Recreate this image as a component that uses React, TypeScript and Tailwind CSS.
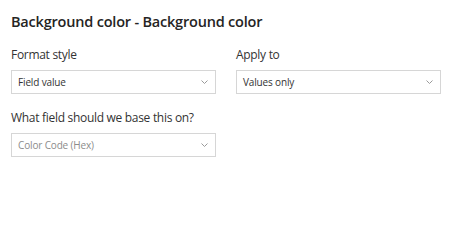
import React from "react";

const Chevron = () => (
  <svg width="7" height="4" viewBox="0 0 7 4" fill="none" className="shrink-0">
    <path d="M0.5 0.5 L3.5 3.5 L6.5 0.5" stroke="#9a9a9a" strokeWidth="1" />
  </svg>
);

const Select = ({ value, placeholder }: { value: string; placeholder?: boolean }) => (
  <div className="flex h-[24px] w-[205px] items-center justify-between border border-[#d6d6d6] bg-white pl-[6px] pr-[7px]">
    <span className={`text-[10px] leading-none tracking-[-0.15px] ${placeholder ? "text-[#8c8c8c]" : "text-[#333333]"}`}>{value}</span>
    <Chevron />
  </div>
);

export default function App() {
  return (
    <div className="h-[248px] w-[474px] bg-white pl-[11px] pt-[12px] text-[#252423]" style={{ fontFamily: '"Open Sans", "Noto Sans", sans-serif' }}>
      <div className="text-[14.5px] font-semibold leading-[20px] tracking-[-0.2px]">Background color - Background color</div>
      <div className="mt-[14px] flex gap-[20px]">
        <div className="flex flex-col">
          <div className="text-[12px] leading-[17px] tracking-[-0.3px] text-[#333]">Format style</div>
          <div className="mt-[7px]"><Select value="Field value" /></div>
        </div>
        <div className="flex flex-col">
          <div className="text-[12px] leading-[17px] tracking-[-0.3px] text-[#333]">Apply to</div>
          <div className="mt-[7px]"><Select value="Values only" /></div>
        </div>
      </div>
      <div className="mt-[15px] text-[12px] leading-[17px] tracking-[-0.3px] text-[#333]">What field should we base this on?</div>
      <div className="mt-[7px]"><Select value="Color Code (Hex)" placeholder /></div>
    </div>
  );
}
